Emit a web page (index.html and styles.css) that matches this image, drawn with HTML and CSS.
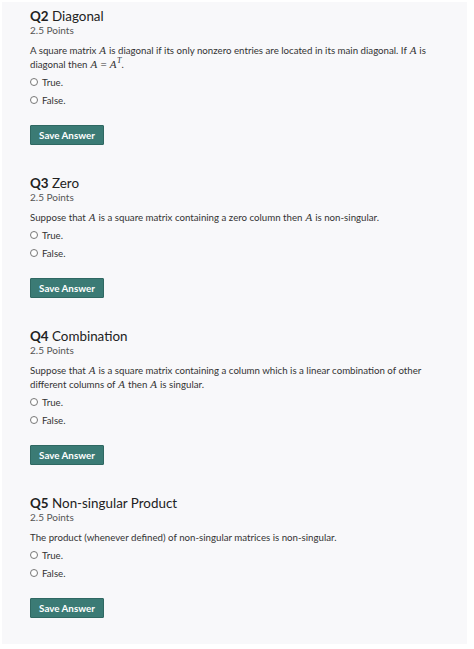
FILE: index.html
```html
<!DOCTYPE html>
<html>
<head>
<meta charset="utf-8">
<link rel="stylesheet" href="styles.css">
</head>
<body>
<div class="panel">
  <section class="q">
    <h2 class="title"><b>Q2</b> Diagonal</h2>
    <div class="points">2.5 Points</div>
    <p class="text">A square matrix <i class="m">A</i> is diagonal if its only nonzero entries are located in its main diagonal. If <i class="m">A</i> is diagonal then <span class="eq"><i class="m">A</i> = <i class="m">A</i><sup class="m">T</sup></span>.</p>
    <label class="opt"><span class="radio"></span>True.</label>
    <label class="opt"><span class="radio"></span>False.</label>
    <button class="save">Save Answer</button>
  </section>
  <section class="q">
    <h2 class="title"><b>Q3</b> Zero</h2>
    <div class="points">2.5 Points</div>
    <p class="text">Suppose that <i class="m">A</i> is a square matrix containing a zero column then <i class="m">A</i> is non-singular.</p>
    <label class="opt"><span class="radio"></span>True.</label>
    <label class="opt"><span class="radio"></span>False.</label>
    <button class="save">Save Answer</button>
  </section>
  <section class="q">
    <h2 class="title"><b>Q4</b> Combination</h2>
    <div class="points">2.5 Points</div>
    <p class="text">Suppose that <i class="m">A</i> is a square matrix containing a column which is a linear combination of other different columns of <i class="m">A</i> then <i class="m">A</i> is singular.</p>
    <label class="opt"><span class="radio"></span>True.</label>
    <label class="opt"><span class="radio"></span>False.</label>
    <button class="save">Save Answer</button>
  </section>
  <section class="q">
    <h2 class="title"><b>Q5</b> Non-singular Product</h2>
    <div class="points">2.5 Points</div>
    <p class="text">The product (whenever defined) of non-singular matrices is non-singular.</p>
    <label class="opt"><span class="radio"></span>True.</label>
    <label class="opt"><span class="radio"></span>False.</label>
    <button class="save">Save Answer</button>
  </section>
</div>
</body>
</html>
```
FILE: styles.css
```css
html, body {
  margin: 0;
  padding: 0;
  background: #ffffff;
}
body {
  font-family: Lato, "Open Sans", sans-serif;
  color: #2d2d2d;
}
.panel {
  margin: 2px 7px 5px 2px;
  height: 642px;
  box-sizing: border-box;
  background: #f8f8fa;
  padding: 6px 28px 0 28px;
}
.q {
  display: flex;
  flex-direction: column;
  align-items: flex-start;
  margin-bottom: 30px;
}
.title {
  margin: 0;
  font-size: 13.4px;
  line-height: 16px;
  font-weight: 400;
  color: #222;
}
.title b {
  font-weight: 700;
}
.points {
  font-size: 10px;
  line-height: 12px;
  color: #555;
  margin-top: 0;
}
.text {
  margin: 7px 0 0 0;
  font-size: 9.7px;
  line-height: 14px;
  color: #333;
}
.m {
  font-family: "Liberation Serif", "DejaVu Serif", serif;
  font-style: italic;
  font-size: 11px;
  line-height: 14px;
  padding: 0 0.5px;
}
.eq {
  font-family: "Liberation Serif", serif;
  font-size: 11px;
  line-height: 14px;
}
sup.m {
  font-size: 8px;
  vertical-align: 5px;
  line-height: 0;
  padding: 0;
}
.opt {
  display: flex;
  align-items: center;
  gap: 4px;
  font-size: 9.7px;
  line-height: 12px;
  color: #333;
  margin-top: 4.5px;
}
.opt + .opt {
  margin-top: 6.5px;
}
.radio {
  width: 6px;
  height: 6px;
  border: 1px solid #777;
  border-radius: 50%;
  background: #fff;
}
.save {
  margin-top: 19px;
  width: 74px;
  height: 20px;
  border: 1px solid #2f6862;
  border-radius: 1px;
  background: #3b7b75;
  color: #fff;
  font-family: Lato, sans-serif;
  font-weight: 700;
  font-size: 9.8px;
  padding: 0;
}
```
